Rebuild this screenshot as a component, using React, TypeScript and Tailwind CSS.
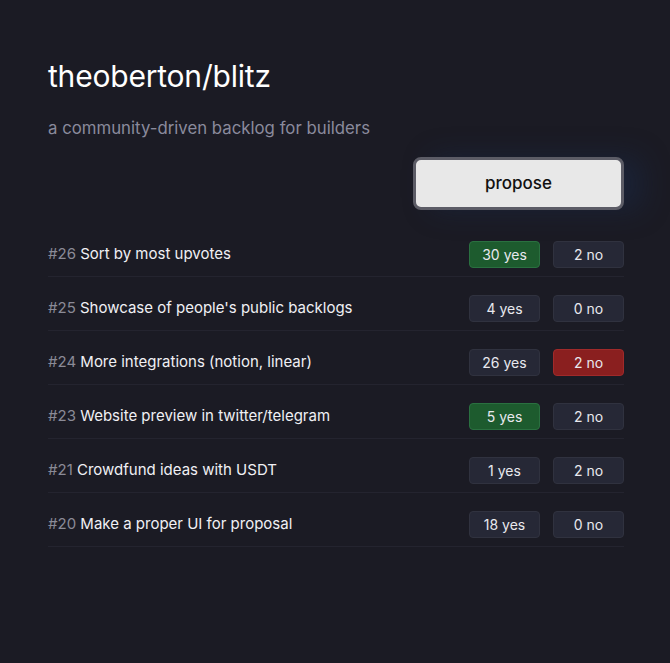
const items = [
  { id: 26, title: "Sort by most upvotes", yes: 30, no: 2, vote: "yes" },
  { id: 25, title: "Showcase of people's public backlogs", yes: 4, no: 0, vote: "" },
  { id: 24, title: "More integrations (notion, linear)", yes: 26, no: 2, vote: "no" },
  { id: 23, title: "Website preview in twitter/telegram", yes: 5, no: 2, vote: "yes" },
  { id: 21, title: "Crowdfund ideas with USDT", yes: 1, no: 2, vote: "" },
  { id: 20, title: "Make a proper UI for proposal", yes: 18, no: 0, vote: "" },
];

const base =
  "w-[71px] h-[27px] rounded-[4px] border text-[14px] text-[#e8e8ee] flex items-center justify-center";

export default function App() {
  return (
    <div className="min-h-[663px] bg-[#1b1b24] font-['Inter','Liberation_Sans',sans-serif] px-[48px] pt-[56px]">
      <div className="w-[576px]">
        <h1 className="text-[30px] leading-[40px] text-white tracking-[-0.2px]">theoberton/blitz</h1>
        <p className="mt-[20px] text-[16.8px] leading-[24px] text-[#8a8a9c]">
          a community-driven backlog for builders
        </p>
        <div className="flex justify-end mt-[17px]">
          <button className="w-[211px] h-[53px] rounded-[8px] border-[3px] border-[#5c5c66] bg-[#e8e8e8] text-[17px] font-medium text-[#111] shadow-[18px_0_28px_rgba(25,50,90,0.35)]">
            propose
          </button>
        </div>
        <div className="mt-[13px] flex flex-col">
          {items.map((it) => (
            <div key={it.id} className="flex items-center mt-[10px] h-[44px] border-b border-[#24242f]">
              <div className="flex-1 text-[15px] text-[#f0f0f4]">
                <span className="text-[#8a8a96]">#{it.id}</span> {it.title}
              </div>
              <div className="flex gap-[13px]">
                <div
                  className={
                    base +
                    (it.vote === "yes"
                      ? " bg-[#1d5b2e] border-[#2a7040]"
                      : " bg-[#262836] border-[#30323f]")
                  }
                >
                  {it.yes} yes
                </div>
                <div
                  className={
                    base +
                    (it.vote === "no"
                      ? " bg-[#8a1f1f] border-[#a02a2a]"
                      : " bg-[#262836] border-[#30323f]")
                  }
                >
                  {it.no} no
                </div>
              </div>
            </div>
          ))}
        </div>
      </div>
    </div>
  );
}
